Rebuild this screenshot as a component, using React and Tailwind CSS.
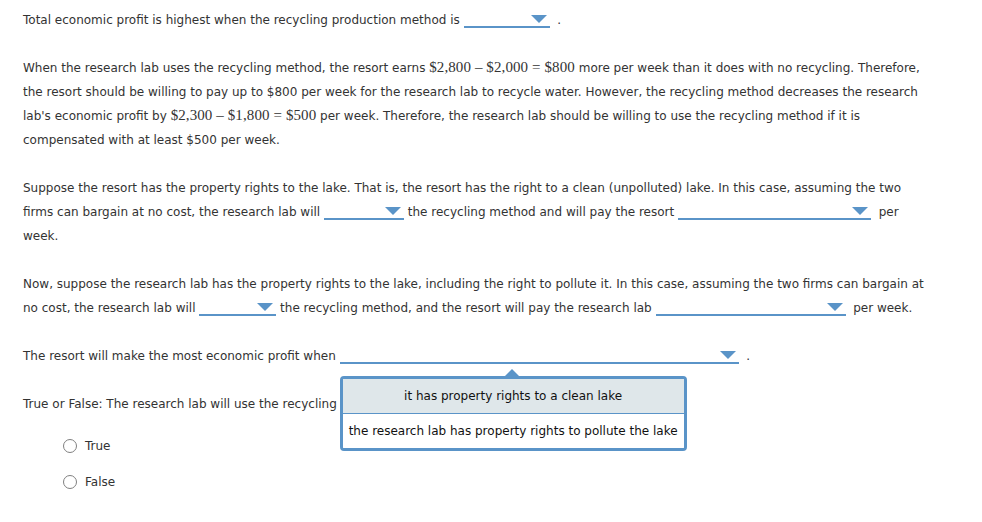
import { useState } from 'react';

const blue = 'border-[#5a94c8]';

function Dropdown({ width, children }) {
  return (
    <span className={`relative inline-block align-middle -mt-[4px] h-[18px] border-b-2 ${blue} ${width}`}>
      <span className="absolute right-[3px] top-[5px] w-0 h-0 border-l-[8px] border-r-[8px] border-t-[8px] border-l-transparent border-r-transparent border-t-[#5a94c8]" />
      {children}
    </span>
  );
}

function M({ children }) {
  return <span className="font-['Liberation_Serif',serif] text-[15px] leading-[0] tracking-[0.1px]">{children}</span>;
}

const options = [
  'it has property rights to a clean lake',
  'the research lab has property rights to pollute the lake',
];

function Radio({ label }) {
  return (
    <label className="flex items-center h-[36px] gap-[8px]">
      <span className="w-[14px] h-[14px] rounded-full border border-[#808080] bg-white" />
      <span>{label}</span>
    </label>
  );
}

export default function App() {
  const [hover] = useState(0);

  return (
    <div className="bg-white w-[982px] h-[522px] overflow-hidden px-[23px] pt-[8px] text-[#333] font-['DejaVu_Sans',sans-serif] text-[12px] leading-[24px]">
      <p className="h-[24px]">
        Total economic profit is highest when the recycling production method is <Dropdown width="w-[86px]" /> &nbsp;.
      </p>

      <p className="mt-[24px]">
        When the research lab uses the recycling method, the resort earns <M>$2,800 – $2,000 = $800</M> more per week than it does with no recycling. Therefore,
        <br />
        the resort should be willing to pay up to $800 per week for the research lab to recycle water. However, the recycling method decreases the research
        <br />
        lab's economic profit by <M>$2,300 – $1,800 = $500</M> per week. Therefore, the research lab should be willing to use the recycling method if it is
        <br />
        compensated with at least $500 per week.
      </p>

      <p className="mt-[24px]">
        Suppose the resort has the property rights to the lake. That is, the resort has the right to a clean (unpolluted) lake. In this case, assuming the two
        <br />
        firms can bargain at no cost, the research lab will <Dropdown width="w-[80px]" /> the recycling method and will pay the resort <Dropdown width="w-[193px]" /> &nbsp;per
        <br />
        week.
      </p>

      <p className="mt-[24px]">
        Now, suppose the research lab has the property rights to the lake, including the right to pollute it. In this case, assuming the two firms can bargain at
        <br />
        no cost, the research lab will <Dropdown width="w-[77px]" /> the recycling method, and the resort will pay the research lab <Dropdown width="w-[190px]" /> &nbsp;per week.
      </p>

      <p className="mt-[24px] h-[24px] relative z-10">
        The resort will make the most economic profit when{' '}
        <Dropdown width="w-[399px]">
          <span className="absolute left-0 top-[30px] w-[347px] text-[12px] leading-[20px] text-[#111]">
            <span className="absolute left-[165px] -top-[7px] w-0 h-0 border-l-[7px] border-r-[7px] border-b-[7px] border-l-transparent border-r-transparent border-b-[#5a94c8]" />
            <span className={`block border-[3px] ${blue} rounded-[4px] bg-white overflow-hidden`}>
              {options.map((o, i) => (
                <span
                  key={o}
                  className={`block text-center whitespace-nowrap ${i === hover ? 'h-[35px] leading-[34px] bg-[#dfe7ea] border-b border-[#5a94c8]' : 'h-[34px] leading-[34px] bg-white'}`}
                >
                  {o}
                </span>
              ))}
            </span>
          </span>
        </Dropdown>{' '}
        &nbsp;.
      </p>

      <p className="mt-[24px] whitespace-nowrap">True or False: The research lab will use the recycling method in both cases.</p>

      <div className="mt-[12px] pl-[40px]">
        <Radio label="True" />
        <Radio label="False" />
      </div>
    </div>
  );
}
